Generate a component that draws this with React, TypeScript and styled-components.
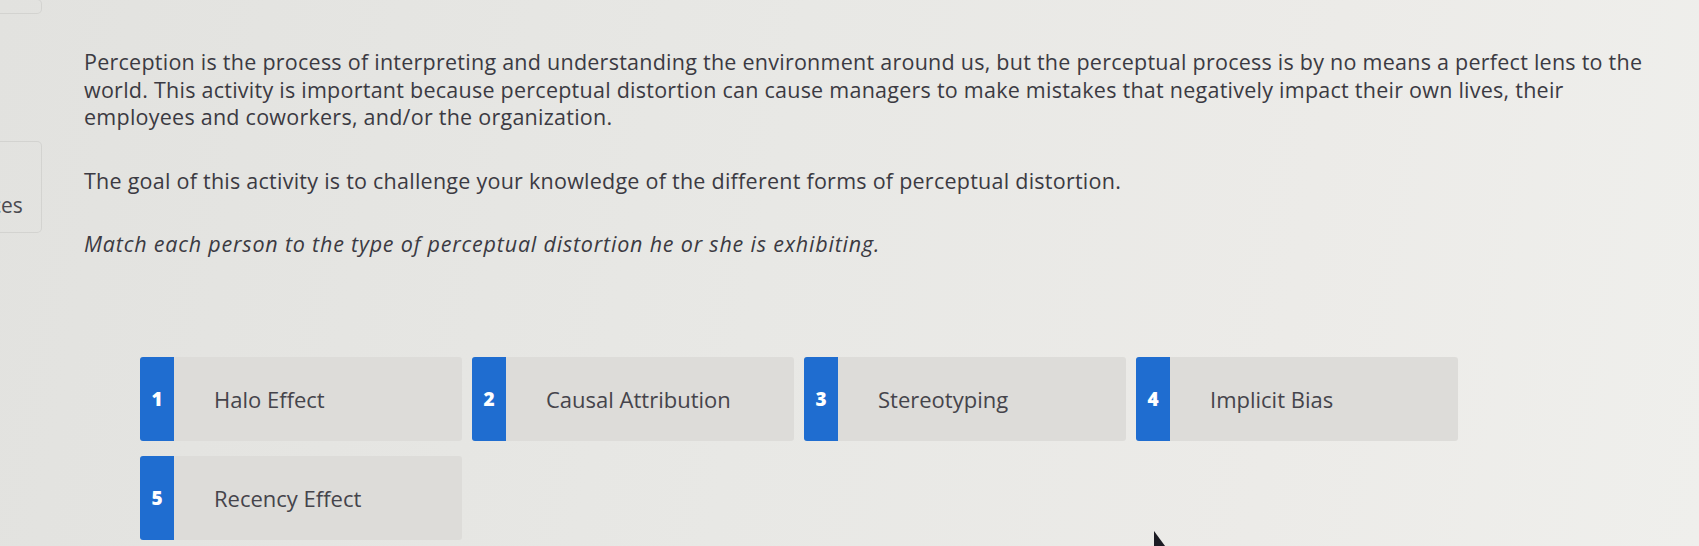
import React from "react";
import styled, { createGlobalStyle } from "styled-components";

const Global = createGlobalStyle`
  html, body { margin: 0; padding: 0; }
  body {
    width: 1699px;
    height: 546px;
    overflow: hidden;
    background: linear-gradient(100deg, #e2e2df 0%, #e8e8e5 45%, #ecebe8 75%, #efefec 100%);
    font-family: "Open Sans", "Lato", sans-serif;
    color: #3b3a42;
  }
`;

const Page = styled.div`
  position: relative;
  display: flex;
  height: 546px;
`;

const Sidebar = styled.div`
  width: 42px;
  flex: none;
  display: flex;
  flex-direction: column;
`;

const SideBox = styled.div<{ $h: number; $mt: number }>`
  height: ${(p) => p.$h}px;
  margin-top: ${(p) => p.$mt}px;
  box-sizing: border-box;
  border: 1px solid #d3d3d0;
  border-left: none;
  border-radius: 0 5px 5px 0;
  overflow: hidden;
  display: flex;
  align-items: flex-end;
  padding-bottom: 13px;
`;

const SideLabel = styled.span`
  font-size: 21px;
  color: #4a4a50;
  margin-left: -9px;
  white-space: nowrap;
`;

const Main = styled.div`
  padding: 48px 0 0 42px;
  width: 1565px;
`;

const Para = styled.p<{ $italic?: boolean; $mb: number }>`
  margin: 0 0 ${(p) => p.$mb}px 0;
  font-size: 21.5px;
  line-height: 27.5px;
  letter-spacing: ${(p) => (p.$italic ? "0.8px" : "0.25px")};
  font-style: ${(p) => (p.$italic ? "italic" : "normal")};
  color: #3b3a42;
`;

const Grid = styled.div`
  margin: 99px 0 0 56px;
  display: grid;
  grid-template-columns: repeat(4, 322px);
  column-gap: 10px;
  row-gap: 15px;
`;

const Card = styled.div`
  display: flex;
  align-items: center;
  height: 84px;
  background: #dddcd9;
  border-radius: 3px;
`;

const Tab = styled.div`
  width: 34px;
  height: 100%;
  flex: none;
  background: #1f6dd0;
  border-radius: 3px 0 0 3px;
  display: flex;
  align-items: center;
  justify-content: center;
  color: #ffffff;
  font-weight: 800;
  font-size: 19px;
`;

const Label = styled.span`
  margin-left: 40px;
  font-size: 22px;
  color: #45444b;
`;

const Cursor = styled.svg`
  position: absolute;
  left: 1152px;
  top: 530px;
`;

const items = [
  "Halo Effect",
  "Causal Attribution",
  "Stereotyping",
  "Implicit Bias",
  "Recency Effect",
];

export default function App() {
  return (
    <>
      <Global />
      <Page>
        <Sidebar>
          <SideBox $h={13} $mt={-1} />
          <SideBox $h={92} $mt={127}>
            <SideLabel>ces</SideLabel>
          </SideBox>
        </Sidebar>
        <Main>
          <Para $mb={36}>
            Perception is the process of interpreting and understanding the
            environment around us, but the perceptual process is by no means a
            perfect lens to the world. This activity is important because
            perceptual distortion can cause managers to make mistakes that
            negatively impact their own lives, their employees and coworkers,
            and/or the organization.
          </Para>
          <Para $mb={36}>
            The goal of this activity is to challenge your knowledge of the
            different forms of perceptual distortion.
          </Para>
          <Para $italic $mb={0}>
            Match each person to the type of perceptual distortion he or she is
            exhibiting.
          </Para>
          <Grid>
            {items.map((t, i) => (
              <Card key={t}>
                <Tab>{i + 1}</Tab>
                <Label>{t}</Label>
              </Card>
            ))}
          </Grid>
        </Main>
        <Cursor width="18" height="20" viewBox="0 0 18 20">
          <path d="M2 1 L2 20 L16 20 Z" fill="#1c1c24" />
        </Cursor>
      </Page>
    </>
  );
}
